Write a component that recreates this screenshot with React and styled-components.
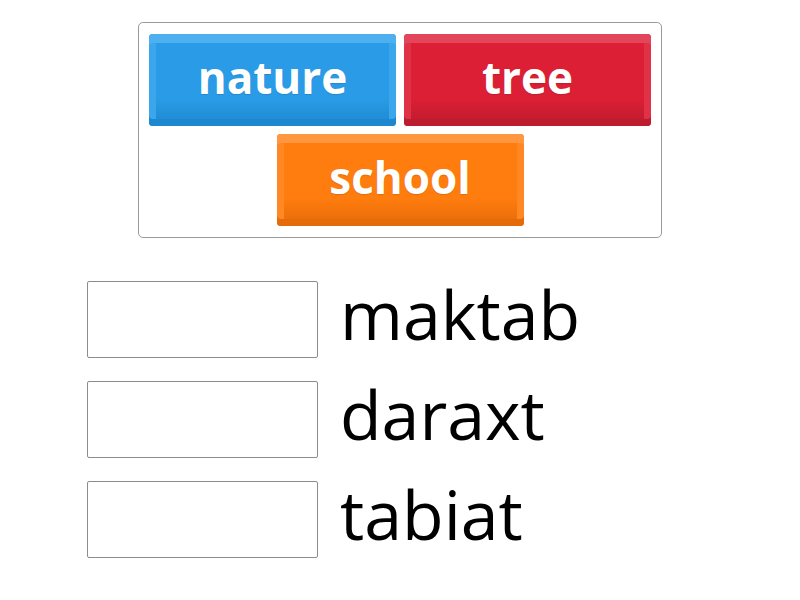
import React from "react";
import styled, { createGlobalStyle } from "styled-components";

const Global = createGlobalStyle`
  html, body { margin: 0; padding: 0; background: #fff; }
  body { font-family: "Open Sans", "Liberation Sans", sans-serif; }
`;

const Page = styled.div`
  width: 800px;
  height: 600px;
  padding-top: 22px;
  box-sizing: border-box;
`;

const Bank = styled.div`
  margin-left: 138px;
  width: 524px;
  height: 216px;
  box-sizing: border-box;
  border: 1px solid #9a9a9a;
  border-radius: 5px;
  padding: 11px 10px;
  display: flex;
  flex-wrap: wrap;
  justify-content: center;
  align-content: flex-start;
  gap: 8px;
`;

const palettes = {
  blue: { main: "#2a9ce7", top: "#4fb0ef", bottom: "#1d88cf", side: "#3aa6ec" },
  red: { main: "#dc1f34", top: "#e3465a", bottom: "#bd1b2e", side: "#df3246" },
  orange: { main: "#ff7c0e", top: "#ff9740", bottom: "#e56b08", side: "#ff8824" },
};

const Tile = styled.div`
  width: 247px;
  height: 92px;
  box-sizing: border-box;
  border-radius: 4px;
  background: linear-gradient(
    to bottom,
    ${(p) => palettes[p.$c].main} 0%,
    ${(p) => palettes[p.$c].main} 70%,
    ${(p) => palettes[p.$c].bottom} 100%
  );
  box-shadow:
    inset 0 9px 0 ${(p) => palettes[p.$c].top},
    inset 0 -7px 0 ${(p) => palettes[p.$c].bottom},
    inset 7px 0 0 ${(p) => palettes[p.$c].side},
    inset -7px 0 0 ${(p) => palettes[p.$c].side};
  display: flex;
  align-items: center;
  justify-content: center;
  color: #fff;
  font-family: "Open Sans", "Liberation Sans", sans-serif;
  font-weight: 700;
  font-size: 44px;
  padding-bottom: 6px;
  text-shadow: 0 1px 1px rgba(0, 0, 0, 0.12);
`;

const Answers = styled.div`
  margin-top: 43px;
  margin-left: 87px;
  display: flex;
  flex-direction: column;
  gap: 23px;
`;

const Row = styled.div`
  display: flex;
  align-items: center;
  gap: 22px;
  height: 77px;
`;

const Slot = styled.div`
  width: 231px;
  height: 77px;
  box-sizing: border-box;
  border: 1px solid #8c8c8c;
  border-radius: 2px;
  background: #fff;
`;

const Word = styled.div`
  font-family: "Open Sans", "Liberation Sans", sans-serif;
  font-size: 68px;
  color: #000;
  line-height: 1;
  padding-bottom: 12px;
`;

export default function App() {
  return (
    <Page>
      <Global />
      <Bank>
        <Tile $c="blue">nature</Tile>
        <Tile $c="red">tree</Tile>
        <Tile $c="orange">school</Tile>
      </Bank>
      <Answers>
        {["maktab", "daraxt", "tabiat"].map((w) => (
          <Row key={w}>
            <Slot />
            <Word>{w}</Word>
          </Row>
        ))}
      </Answers>
    </Page>
  );
}
